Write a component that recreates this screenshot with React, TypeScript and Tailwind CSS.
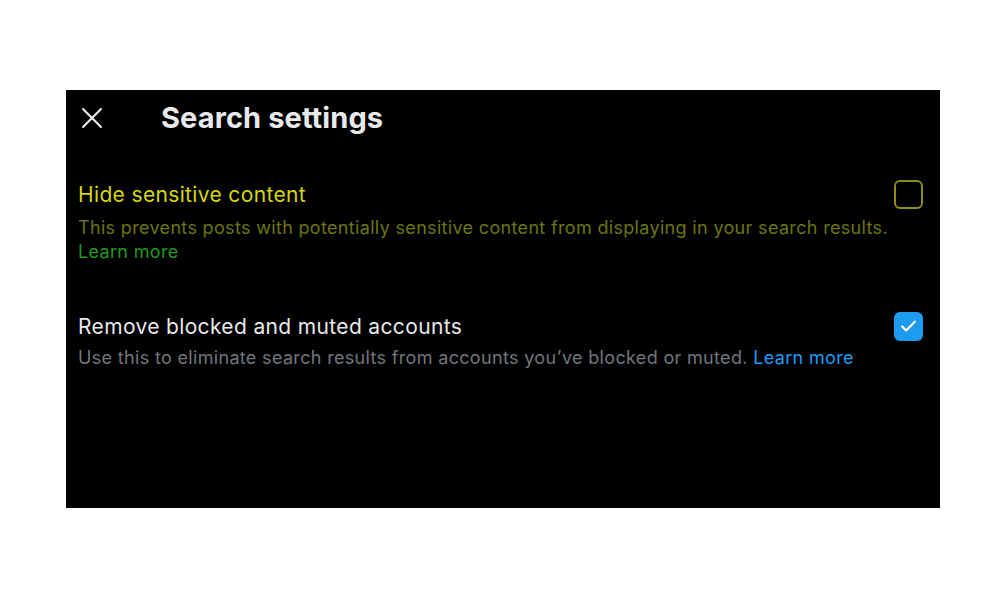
import { X, Check } from 'lucide-react';

export default function App() {
  return (
    <div className="w-[1000px] h-[600px] bg-white pt-[90px] pl-[66px]" style={{ fontFamily: 'Inter, "Open Sans", sans-serif' }}>
      <div className="w-[874px] h-[418px] bg-black">
        <div className="h-[56px] flex items-center pl-[8px]">
          <X size={36} strokeWidth={1.4} className="text-[#e7e9ea]" />
          <h1 className="ml-[51px] text-[29px] font-bold text-[#e7e9ea] tracking-[0.1px]">Search settings</h1>
        </div>

        <div className="flex items-start pl-[12px] pr-[17px] pt-[36px]">
          <div className="flex-1">
            <div className="text-[21px] leading-[26px] tracking-[0.35px] text-[#d6d70c]">Hide sensitive content</div>
            <p className="mt-[8px] text-[18px] leading-[24px] tracking-[0.33px] text-[#6d7410]">
              This prevents posts with potentially sensitive content from displaying in your search results.
              <br />
              <span className="text-[#1f9a1f]">Learn more</span>
            </p>
          </div>
          <div className="w-[29px] h-[29px] mt-[-2px] rounded-[6px] border-2 border-[#8d8e12]" />
        </div>

        <div className="flex items-start pl-[12px] pr-[17px] pt-[50px]">
          <div className="flex-1">
            <div className="text-[21px] leading-[26px] tracking-[0.35px] text-[#e7e9ea]">Remove blocked and muted accounts</div>
            <p className="mt-[6px] text-[18px] leading-[24px] tracking-[0.33px] text-[#71767b]">
              Use this to eliminate search results from accounts you’ve blocked or muted.{' '}
              <span className="text-[#1d9bf0]">Learn more</span>
            </p>
          </div>
          <div className="w-[29px] h-[29px] mt-[-2px] rounded-[6px] bg-[#1d9bf0] flex items-center justify-center">
            <Check size={19} strokeWidth={2.8} className="text-white" />
          </div>
        </div>
      </div>
    </div>
  );
}
